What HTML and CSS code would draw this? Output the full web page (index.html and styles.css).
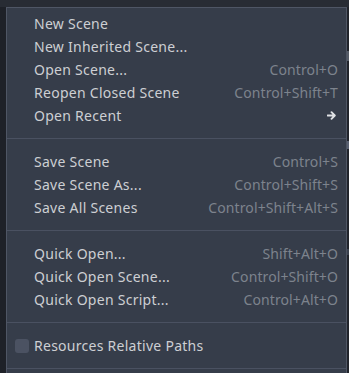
FILE: index.html
```html
<!DOCTYPE html>
<html>
<head>
<meta charset="utf-8">
<link rel="stylesheet" href="styles.css">
</head>
<body>
<div class="screen">
  <div class="topbar"></div>
  <div class="main">
    <div class="leftstrip"></div>
    <div class="popup">
      <div class="row"><span class="label">New Scene</span><span class="sc"></span></div>
      <div class="row"><span class="label">New Inherited Scene...</span><span class="sc"></span></div>
      <div class="row"><span class="label">Open Scene...</span><span class="sc">Control+O</span></div>
      <div class="row"><span class="label">Reopen Closed Scene</span><span class="sc">Control+Shift+T</span></div>
      <div class="row"><span class="label">Open Recent</span>
        <svg class="arrow" width="9" height="9" viewBox="0 0 9 9"><path d="M0.5 4.5H7.5M4.5 1.2L7.8 4.5L4.5 7.8" fill="none" stroke="#e0e2e5" stroke-width="1.9" stroke-linecap="round" stroke-linejoin="round"/></svg>
      </div>
      <div class="sep"></div>
      <div class="row"><span class="label">Save Scene</span><span class="sc">Control+S</span></div>
      <div class="row"><span class="label">Save Scene As...</span><span class="sc">Control+Shift+S</span></div>
      <div class="row"><span class="label">Save All Scenes</span><span class="sc">Control+Shift+Alt+S</span></div>
      <div class="sep"></div>
      <div class="row"><span class="label">Quick Open...</span><span class="sc">Shift+Alt+O</span></div>
      <div class="row"><span class="label">Quick Open Scene...</span><span class="sc">Control+Shift+O</span></div>
      <div class="row"><span class="label">Quick Open Script...</span><span class="sc">Control+Alt+O</span></div>
      <div class="sep"></div>
      <div class="row check"><span class="box"></span><span class="label">Resources Relative Paths</span></div>
      <div class="sep"></div>
    </div>
    <div class="rightstrip">
      <div class="mark m1"></div>
      <div class="mark m2"></div>
      <div class="mark m3"></div>
    </div>
  </div>
</div>
</body>
</html>
```

FILE: styles.css
```css
html, body {
  margin: 0;
  padding: 0;
  background: #20232a;
  overflow: hidden;
}
.screen {
  width: 349px;
  height: 373px;
  display: flex;
  flex-direction: column;
  font-family: "Noto Sans", "Open Sans", sans-serif;
  font-size: 14px;
}
.topbar {
  height: 7px;
  background: #282c34;
  flex: none;
}
.main {
  flex: 1;
  display: flex;
  min-height: 0;
}
.leftstrip {
  width: 6px;
  background: #1e2128;
  flex: none;
}
.popup {
  width: 331px;
  flex: none;
  background: #363d4a;
  border: 1px solid #4f5665;
  border-bottom: none;
  padding: 4px 8px 0 0;
  box-sizing: content-box;
  overflow: hidden;
}
.row {
  height: 23px;
  display: flex;
  align-items: center;
  justify-content: space-between;
  padding-left: 27px;
  line-height: 23px;
}
.label {
  color: #cdcfd3;
  white-space: nowrap;
  letter-spacing: 0.27px;
}
.sc {
  color: #7d838d;
  white-space: nowrap;
  letter-spacing: 0.1px;
}
.arrow {
  margin-right: 2px;
}
.sep {
  height: 23px;
  display: flex;
  align-items: center;
  margin-right: -8px;
}
.sep::before {
  content: "";
  flex: 1;
  height: 1px;
  background: #4a5161;
}
.row.check {
  padding-left: 8px;
  justify-content: flex-start;
  gap: 5px;
}
.box {
  width: 14px;
  height: 14px;
  border-radius: 3px;
  background: #4b5262;
  flex: none;
}
.rightstrip {
  flex: 1;
  background: #21242b;
  display: flex;
  flex-direction: column;
}
.mark {
  width: 2px;
}
.m1 { height: 10px; margin-top: 44px; background: #555b66; }
.m2 { height: 8px; margin-top: 80px; background: #596070; }
.m3 { height: 6px; margin-top: 100px; background: #3a404c; }
```
